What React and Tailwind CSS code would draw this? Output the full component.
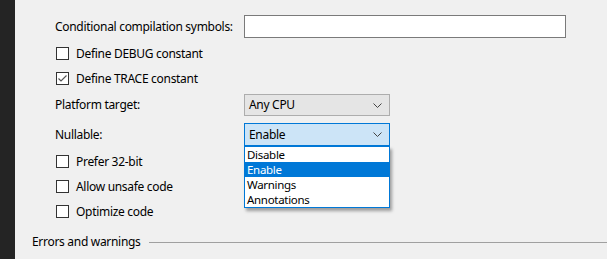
import React from "react";

const Chevron = () => (
    <svg width="9" height="5" viewBox="0 0 9 5" className="shrink-0">
        <path d="M0.5 0.5 L4.5 4.5 L8.5 0.5" fill="none" stroke="#444" strokeWidth="1" />
    </svg>
);

const CheckRow = ({ label, checked }) => (
    <div className="h-[25px] flex items-center">
        <div className="w-[13px] h-[13px] border border-[#333] bg-white flex items-center justify-center">
            {checked && (
                <svg width="11" height="11" viewBox="0 0 11 11">
                    <path d="M1.5 5.5 L4 8 L9.5 2.5" fill="none" stroke="#555" strokeWidth="1.2" />
                </svg>
            )}
        </div>
        <span className="ml-[7px]">{label}</span>
    </div>
);

const options = ["Disable", "Enable", "Warnings", "Annotations"];

export default function App() {
    return (
        <div className="w-[607px] h-[259px] flex bg-[#f0f0f0] text-[12px] tracking-[-0.3px] text-black overflow-hidden" style={{ fontFamily: '"Noto Sans", "Open Sans", sans-serif' }}>
            {/* dunkler Rand links */}
            <div className="w-[15px] shrink-0 bg-[#242424]" />

            <div className="flex-1 pt-[15px]">
                {/* Symbole */}
                <div className="flex items-center h-[23px] pl-[40px]">
                    <span className="w-[189px] whitespace-nowrap">Conditional compilation symbols:</span>
                    <div className="w-[322px] h-[23px] border border-[#7a7a7a] bg-white" />
                </div>

                <div className="pl-[41px] mt-[3px]">
                    <CheckRow label="Define DEBUG constant" />
                    <CheckRow label="Define TRACE constant" checked />
                </div>

                <div className="flex items-center h-[22px] pl-[40px] mt-[3px]">
                    <span className="w-[189px]">Platform target:</span>
                    <div className="w-[146px] h-[22px] border border-[#adadad] bg-[#e5e5e5] flex items-center justify-between pl-[4px] pr-[7px]">
                        <span>Any CPU</span>
                        <Chevron />
                    </div>
                </div>

                <div className="flex items-center h-[23px] pl-[40px] mt-[7px]">
                    <span className="w-[189px]">Nullable:</span>
                    <div className="relative w-[146px] h-[23px]">
                        <div className="h-full border border-[#0078d7] bg-[#cce4f7] flex items-center justify-between pl-[4px] pr-[7px]">
                            <span>Enable</span>
                            <Chevron />
                        </div>
                        {/* aufgeklappte Liste */}
                        <div className="absolute left-0 top-[23px] w-[146px] border border-[#0078d7] bg-white shadow-[2px_3px_3px_rgba(0,0,0,0.35)] z-10">
                            {options.map((o) => (
                                <div key={o} className={`h-[15px] leading-[15px] text-[11.5px] pl-[2px] ${o === "Enable" ? "bg-[#0078d7] text-white" : ""}`}>{o}</div>
                            ))}
                        </div>
                    </div>
                </div>

                <div className="pl-[41px] mt-[3px]">
                    <CheckRow label="Prefer 32-bit" />
                    <CheckRow label="Allow unsafe code" />
                    <CheckRow label="Optimize code" />
                </div>

                <div className="flex items-center mt-[8px] pl-[17px] h-[20px]">
                    <span>Errors and warnings</span>
                    <div className="flex-1 h-px bg-[#a0a0a0] ml-[8px]" />
                </div>
            </div>
        </div>
    );
}
